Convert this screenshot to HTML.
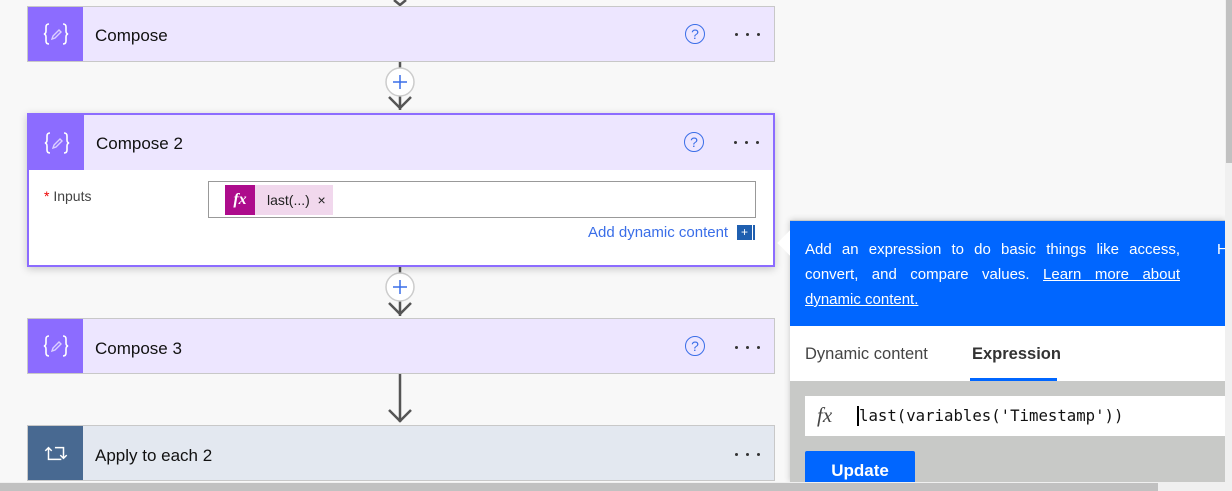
<!DOCTYPE html><html><head><style>
body{margin:0;width:1232px;height:491px;background:#f8f8f8;position:relative;overflow:hidden;font-family:"Segoe UI","Liberation Sans",sans-serif}
.card{position:absolute;left:27px;width:748px;box-sizing:border-box;border:1px solid #c8c8c8;background:#ede6ff}
.ic{position:absolute;left:0;top:0;width:55px;height:100%;background:#8c6cff;display:flex;align-items:center;justify-content:center}
.t{position:absolute;left:67px;font-size:17px;color:#111}
.q{position:absolute;width:18px;height:18px;border:1.5px solid #3a6ee8;border-radius:50%;color:#3a6ee8;font-size:14px;text-align:center;line-height:18px}
.dots{position:absolute;display:flex;gap:8px}
.dots i{width:3px;height:3px;border-radius:50%;background:#333;display:block}
.abs{position:absolute}
</style></head><body>
<svg width="0" height="0" style="position:absolute"><defs>
<symbol id="cb" viewBox="0 0 30 30"><g fill="none" stroke="#fff" stroke-width="1.6"><path d="M8 5Q5 5 5 8V12Q5 14.5 3 15Q5 15.5 5 18V22Q5 25 8 25"/><path d="M22 5Q25 5 25 8V12Q25 14.5 27 15Q25 15.5 25 18V22Q25 25 22 25"/></g><path d="M11 20L12 17L18 11L20 13L14 19Z" fill="none" stroke="#dcd0ff" stroke-width="1.4"/></symbol>
</defs></svg>
<svg class="abs" style="left:0;top:0" width="780" height="491">
<g stroke="#555" stroke-width="2.5" fill="none">
<path d="M394 0 L400 5 L406 0"/>
<line x1="400" y1="61" x2="400" y2="68"/><line x1="400" y1="96" x2="400" y2="110"/><path d="M389 97 L400 108 L411 97"/>
<line x1="400" y1="266" x2="400" y2="273"/><line x1="400" y1="301" x2="400" y2="316"/><path d="M389 303 L400 314 L411 303"/>
<line x1="400" y1="373" x2="400" y2="422"/><path d="M389 410 L400 421 L411 410"/>
</g>
<circle cx="400" cy="82" r="14" fill="#fff" stroke="#ccc" stroke-width="1.5"/>
<path d="M393 82H407M400 75V89" stroke="#3a6ee8" stroke-width="1.5"/>
<circle cx="400" cy="287" r="14" fill="#fff" stroke="#ccc" stroke-width="1.5"/>
<path d="M393 287H407M400 280V294" stroke="#3a6ee8" stroke-width="1.5"/>
</svg>

<div class="card" style="top:6px;height:56px"><div class="ic"><svg width="30" height="30"><use href="#cb"/></svg></div><div class="t" style="top:19px">Compose</div><div class="q" style="left:657px;top:17px">?</div><div class="dots" style="left:707px;top:26px"><i></i><i></i><i></i></div></div>

<div class="card" style="top:113px;height:154px;border:2px solid #8c6cff;background:#fff;box-shadow:0 2px 8px rgba(0,0,0,.2)">
<div style="position:absolute;left:0;top:0;right:0;height:55px;background:#ede6ff"></div>
<div class="ic" style="height:55px"><svg width="30" height="30"><use href="#cb"/></svg></div><div class="t" style="top:19px">Compose 2</div><div class="q" style="left:655px;top:17px">?</div><div class="dots" style="left:705px;top:26px"><i></i><i></i><i></i></div>
<div class="abs" style="left:15px;top:73px;font-size:14px;color:#444"><span style="color:#e00">*</span> Inputs</div>
<div class="abs" style="left:179px;top:66px;width:548px;height:37px;box-sizing:border-box;border:1px solid #999;background:#fff">
<div class="abs" style="left:16px;top:3px;width:30px;height:30px;background:#ad0c8c;color:#fff;font-family:'Liberation Serif',serif;font-style:italic;font-weight:bold;font-size:16px;text-align:center;line-height:30px">fx</div>
<div class="abs" style="left:46px;top:3px;width:78px;height:30px;background:#f1d8ed;font-size:14px;line-height:30px;padding-left:12px;box-sizing:border-box;color:#222">last(...) &nbsp;×</div></div>
<div class="abs" style="left:559px;top:109px;font-size:15px;color:#3a6ee8">Add dynamic content</div>
<div class="abs" style="left:708px;top:110px;width:15px;height:15px;background:#1f5fb0;color:#fff;font-size:12px;text-align:center;line-height:15px">+</div>
<div class="abs" style="left:724px;top:110px;width:2px;height:15px;background:#1f5fb0"></div>
</div>

<div class="card" style="top:318px;height:56px"><div class="ic"><svg width="30" height="30"><use href="#cb"/></svg></div><div class="t" style="top:20px">Compose 3</div><div class="q" style="left:657px;top:17px">?</div><div class="dots" style="left:707px;top:27px"><i></i><i></i><i></i></div></div>

<div class="card" style="top:425px;height:56px;background:#e3e8f0"><div class="ic" style="background:#486991"><svg width="30" height="30" viewBox="0 0 28 28" fill="none" stroke="#fff" stroke-width="1.4"><path d="M4 12L7 9L10 12M7 9V20H19"/><path d="M13 9H21V19M18 16L21 19L24 16"/></svg></div><div class="t" style="top:20px">Apply to each 2</div><div class="dots" style="left:707px;top:27px"><i></i><i></i><i></i></div></div>

<div class="abs" style="left:790px;top:220px;width:435px;height:262px;background:#c8c9c7;box-shadow:0 0 6px rgba(0,0,0,.2)">
<div class="abs" style="left:-9px;top:14px;width:18px;height:18px;background:#fff;transform:rotate(45deg)"></div>
<div class="abs" style="left:0;top:1px;width:435px;height:105px;background:#0066ff;color:#fff;font-size:15px;line-height:25px">
<div class="abs" style="left:15px;top:16px;width:375px;text-align:justify;text-align-last:left">Add an expression to do basic things like access, convert, and compare values. <u>Learn more about dynamic content.</u></div>
<div class="abs" style="left:427px;top:16px">H</div></div>
<div class="abs" style="left:0;top:106px;width:435px;height:55px;background:#fff;font-size:16.5px">
<div class="abs" style="left:15px;top:19px;color:#444">Dynamic content</div>
<div class="abs" style="left:182px;top:19px;color:#333;font-weight:600">Expression</div>
<div class="abs" style="left:180px;top:52px;width:87px;height:3px;background:#0066ff"></div></div>
<div class="abs" style="left:15px;top:176px;width:420px;height:40px;background:#fff">
<div class="abs" style="left:12px;top:7px;font-family:'Liberation Serif',serif;font-style:italic;font-size:21px;color:#444">fx</div>
<div class="abs" style="left:52px;top:10px;font-family:'DejaVu Sans Mono','Liberation Mono',monospace;font-size:15.7px;color:#111;border-left:2px solid #000;line-height:20px">last(variables('Timestamp'))</div></div>
<div class="abs" style="left:15px;top:231px;width:110px;height:31px;background:#0066ff;color:#fff;font-weight:600;font-size:17px;text-align:center;line-height:40px;overflow:hidden;border-radius:2px 2px 0 0">Update</div>
</div>

<div class="abs" style="left:1225px;top:0;width:7px;height:491px;background:#f0f0f0"></div>
<div class="abs" style="left:1226px;top:0;width:6px;height:163px;background:#c1c1c1"></div>
<div class="abs" style="left:0;top:482px;width:1225px;height:9px;background:#f0f0f0"></div>
<div class="abs" style="left:0;top:483px;width:1158px;height:8px;background:#c1c1c1"></div>
</body></html>
